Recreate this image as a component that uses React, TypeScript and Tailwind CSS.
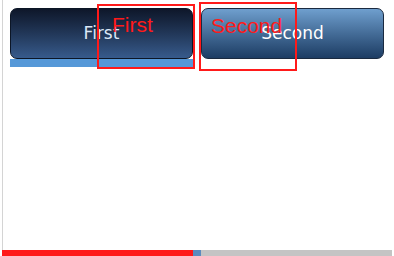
const App = () => {
  return (
    <div className="relative w-[394px] h-[256px] bg-white overflow-hidden" style={{ fontFamily: '"DejaVu Sans", sans-serif' }}>
      <div className="ml-[2px] h-[250px] border-l border-[#d4d4d4] pl-[7px] pt-[8px]">
        <div className="flex gap-[8px]">
          <div className="flex flex-col w-[183px]">
            <button className="h-[51px] rounded-[7px] border border-[#0c1626] bg-gradient-to-b from-[#0e172a] to-[#375b8c] text-[17px] text-[#dce7f7]">
              First
            </button>
            <div className="h-[8px] bg-[#5598d8]" />
          </div>
          <div className="flex flex-col w-[183px]">
            <button className="h-[51px] rounded-[7px] border border-[#1a2a40] bg-gradient-to-b from-[#6f9fce] to-[#1d3d64] text-[17px] text-white">
              Second
            </button>
          </div>
        </div>
      </div>

      <div className="ml-[2px] flex h-[6px] w-[390px]">
        <div className="w-[191px] bg-[#ff1a1a]" />
        <div className="w-[8px] bg-[#5b8bbf]" />
        <div className="w-[191px] bg-[#c4c4c4]" />
      </div>

      <div
        className="absolute left-[97px] top-[4px] w-[98px] h-[65px] border-2 border-[#ff1a1a] pl-[13px] pt-[8px] text-[21px] leading-none text-[#ff1a1a]"
        style={{ fontFamily: '"Liberation Sans", Arial, sans-serif' }}
      >
        First
      </div>
      <div
        className="absolute left-[199px] top-[2px] w-[98px] h-[69px] border-2 border-[#ff1a1a] pl-[10px] pt-[11px] text-[21px] leading-none text-[#ff1a1a]"
        style={{ fontFamily: '"Liberation Sans", Arial, sans-serif' }}
      >
        Second
      </div>
    </div>
  );
};

export default App;
